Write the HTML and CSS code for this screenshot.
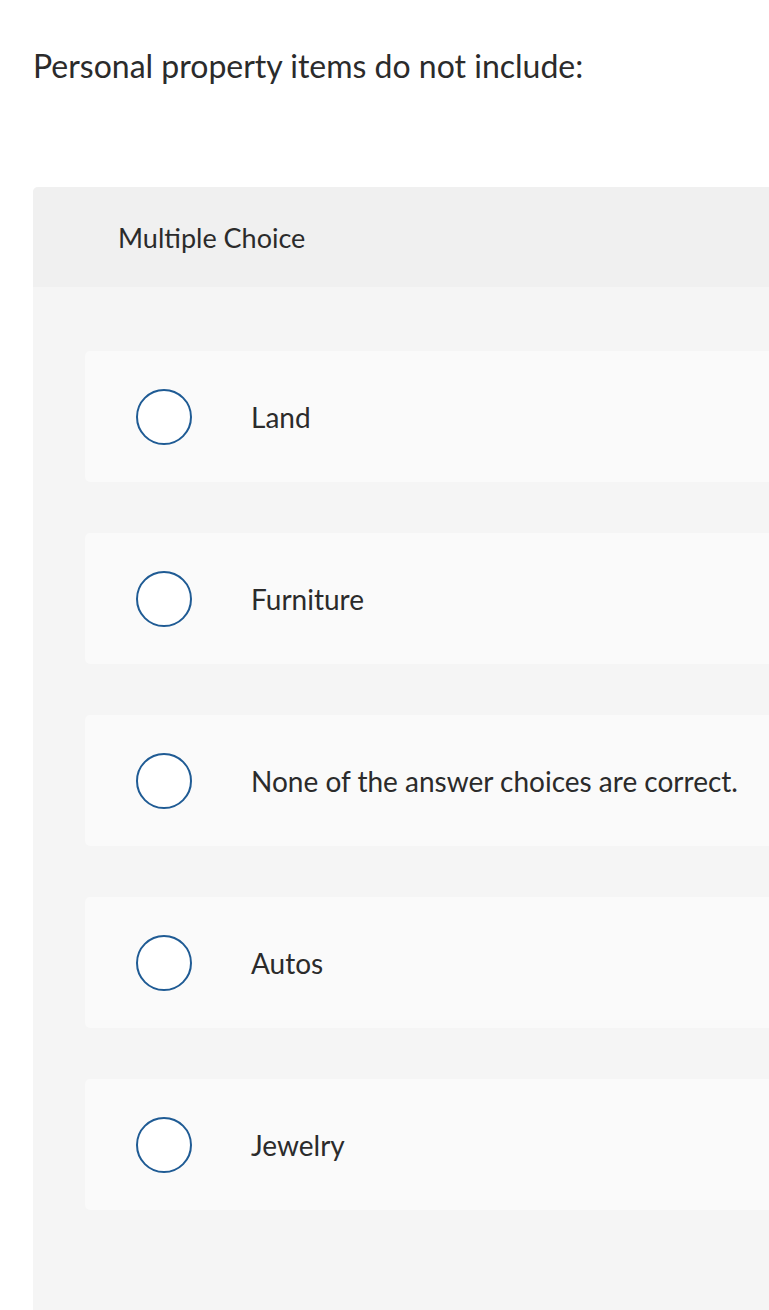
FILE: index.html
```html
<!DOCTYPE html>
<html lang="en">
<head>
  <meta charset="UTF-8" />
  <meta name="viewport" content="width=device-width, initial-scale=1" />
  <title>Question</title>
  <link rel="stylesheet" href="styles.css">
</head>
<body>

  <h1 class="prompt">Personal property items do not include:</h1>

  <div class="question-panel">
    <div class="panel-header">Multiple Choice</div>

    <ul class="choice-list">
      <li class="choice"><span class="radio"></span><span class="choice-text">Land</span></li>
      <li class="choice"><span class="radio"></span><span class="choice-text">Furniture</span></li>
      <li class="choice"><span class="radio"></span><span class="choice-text">None of the answer choices are correct.</span></li>
      <li class="choice"><span class="radio"></span><span class="choice-text">Autos</span></li>
      <li class="choice"><span class="radio"></span><span class="choice-text">Jewelry</span></li>
    </ul>
  </div>

</body>
</html>
```

FILE: styles.css
```css
body {
  margin: 0;
  font-family: Lato, "Open Sans", sans-serif;
  color: #2b2b2b;
  background-color: #ffffff;
  overflow: hidden;
}

.prompt {
  margin: 0;
  padding: 46px 0 0 33px;
  font-size: 32px;
  line-height: 40px;
  font-weight: normal;
}

.question-panel {
  margin: 101px 0 0 33px;
  background-color: #f5f5f5;
  border-radius: 5px 0 0 0;
  padding-bottom: 120px;
}

.panel-header {
  height: 100px;
  display: flex;
  align-items: center;
  padding-left: 85px;
  background-color: #f0f0f0;
  border-radius: 5px 0 0 0;
  font-size: 27px;
}

.choice-list {
  list-style: none;
  margin: 0;
  padding: 64px 0 0 52px;
  display: flex;
  flex-direction: column;
  gap: 51px;
}

.choice {
  height: 131px;
  display: flex;
  align-items: center;
  padding-left: 51px;
  background-color: #fafafa;
  border-radius: 5px 0 0 5px;
}

.radio {
  width: 52px;
  height: 52px;
  border: 2px solid #1f5b94;
  border-radius: 50%;
  background-color: #ffffff;
  flex-shrink: 0;
}

.choice-text {
  margin-left: 59px;
  font-size: 28px;
}
```
